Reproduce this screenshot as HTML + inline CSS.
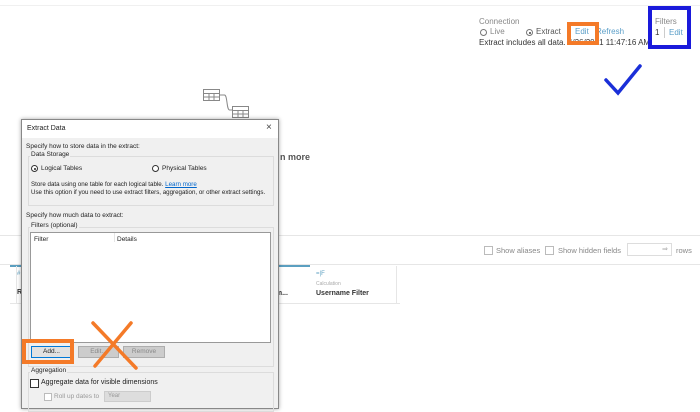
<!DOCTYPE html>
<html><head><style>
*{margin:0;padding:0;box-sizing:border-box}
body{width:700px;height:406px;overflow:hidden;background:#fff;position:relative;font-family:"Liberation Sans",sans-serif;}
.a{position:absolute;white-space:nowrap}
.t{font-size:8px;color:#333}
.g{color:#888}
.lk{color:#5a9ec8}
.rad{position:absolute;width:7px;height:7px;border:1px solid #777;border-radius:50%;background:#fff}
.cb{position:absolute;border:1px solid #bbb;background:#fff}
.grp{position:absolute;border:1px solid #dcdcdc}
.btn{position:absolute;height:12px;border:1px solid #adadad;background:#ccc;font-size:6.5px;color:#888;text-align:center;line-height:10px}
.d{font-size:6.5px;color:#222}
</style></head><body>
<div class="a" style="left:0;top:5px;width:700px;height:1px;background:#f0f0f0"></div>

<div class="a t g" style="left:479px;top:17px">Connection</div>
<div class="rad" style="left:480px;top:29px"></div><div class="a t g" style="left:490px;top:27px">Live</div>
<div class="rad" style="left:526px;top:29px"><div style="position:absolute;left:1.5px;top:1.5px;width:2px;height:2px;border-radius:50%;background:#444"></div></div>
<div class="a t" style="left:536px;top:27px;color:#555">Extract</div>
<div class="a t lk" style="left:575px;top:27px">Edit</div>
<div class="a t lk" style="left:596px;top:27px">Refresh</div>
<div class="a t" style="left:479px;top:38px">Extract includes all data. 4/26/2021 11:47:16 AM</div>
<div class="a" style="left:567px;top:22px;width:32px;height:23px;border:4px solid #f47a28"></div>

<div class="a t g" style="left:655px;top:17px">Filters</div>
<div class="a t" style="left:655px;top:28px">1</div>
<div class="a" style="left:664px;top:27px;width:1px;height:11px;background:#ccc"></div>
<div class="a t lk" style="left:669px;top:28px">Edit</div>
<div class="a" style="left:648px;top:6px;width:43px;height:43px;border:4px solid #1a1adb"></div>
<svg class="a" style="left:600px;top:60px" width="46" height="40"><path d="M6 20 L18 33 L40 6" stroke="#1a2fd8" stroke-width="3.5" fill="none" stroke-linecap="round"/></svg>

<svg class="a" style="left:200px;top:86px" width="60" height="36"><g stroke="#888" fill="#fff" stroke-width="1"><rect x="3.5" y="3.5" width="16" height="11"/><path d="M3.5 7.5h16M3.5 11h16M9 7.5v7M14 7.5v7"/><rect x="32.5" y="20.5" width="16" height="11"/><path d="M32.5 24.5h16M32.5 28h16M38 24.5v7M43 24.5v7"/><path d="M19.5 9h5c3 0 2 15 5 15h3" fill="none"/></g></svg>
<div class="a" style="left:280px;top:152px;font-size:9px;font-weight:bold;color:#555">n more</div>

<div class="a" style="left:0;top:235px;width:700px;height:1px;background:#e6e6e6"></div>
<div class="cb" style="left:484px;top:246px;width:9px;height:9px"></div><div class="a t g" style="left:496px;top:246px;font-size:7.5px">Show aliases</div>
<div class="cb" style="left:545px;top:246px;width:9px;height:9px"></div><div class="a t g" style="left:558px;top:246px;font-size:7.5px">Show hidden fields</div>
<div class="a" style="left:627px;top:243px;width:45px;height:13px;border:1px solid #ddd"></div><div class="a" style="left:662px;top:245px;font-size:7px;color:#aaa">⇒</div>
<div class="a t g" style="left:676px;top:246px;font-size:7.5px">rows</div>
<div class="a" style="left:0;top:264px;width:700px;height:1px;background:#e6e6e6"></div>
<div class="a" style="left:10px;top:265px;width:300px;height:2px;background:#5b9fc0"></div>
<div class="a" style="left:16px;top:266px;width:1px;height:37px;background:#e6e6e6"></div>
<div class="a" style="left:396px;top:266px;width:1px;height:37px;background:#e6e6e6"></div>
<div class="a" style="left:10px;top:303px;width:390px;height:1px;background:#e6e6e6"></div>
<div class="a" style="left:17px;top:271px;font-size:6px;color:#5b9fc0">#</div>
<div class="a" style="left:17px;top:289px;font-size:7px;font-weight:bold;color:#333">R</div>
<div class="a" style="left:316px;top:271px;font-size:6px;color:#5b9fc0">=|F</div>
<div class="a" style="left:316px;top:281px;font-size:5px;color:#aaa">Calculation</div>
<div class="a" style="left:316px;top:290px;font-size:7px;font-weight:bold;color:#333">Username Filter</div>
<div class="a" style="left:272px;top:290px;font-size:7px;font-weight:bold;color:#333">am...</div>

<!-- dialog -->
<div class="a" style="left:21px;top:119px;width:258px;height:290px;background:#f0f0f0;border:1px solid #888;box-shadow:0 0 4px rgba(0,0,0,.35)">
 <div class="a" style="left:0;top:0;width:256px;height:18px;background:#fff"></div>
 <div class="a" style="left:5px;top:5px;font-size:7px;color:#222">Extract Data</div>
 <div class="a" style="left:244px;top:2px;font-size:10px;color:#444">×</div>
 <div class="a d" style="left:4px;top:23px">Specify how to store data in the extract:</div>
 <div class="grp" style="left:6px;top:36px;width:246px;height:50px"></div>
 <div class="a d" style="left:8px;top:31px;background:#f0f0f0;padding:0 1px">Data Storage</div>
 <div class="rad" style="left:9px;top:45px;border-color:#333"><div style="position:absolute;left:1.5px;top:1.5px;width:2px;height:2px;border-radius:50%;background:#222"></div></div>
 <div class="a d" style="left:19px;top:45px">Logical Tables</div>
 <div class="rad" style="left:130px;top:45px;border-color:#333"></div>
 <div class="a d" style="left:140px;top:45px">Physical Tables</div>
 <div class="a d" style="left:9px;top:61px;font-size:6.2px">Store data using one table for each logical table. <span style="color:#0066cc;text-decoration:underline">Learn more</span></div>
 <div class="a d" style="left:9px;top:69px;font-size:6.2px">Use this option if you need to use extract filters, aggregation, or other extract settings.</div>
 <div class="a d" style="left:4px;top:92px">Specify how much data to extract:</div>
 <div class="grp" style="left:6px;top:107px;width:246px;height:140px"></div>
 <div class="a d" style="left:8px;top:102px;background:#f0f0f0;padding:0 1px">Filters (optional)</div>
 <div class="a" style="left:8px;top:112px;width:241px;height:111px;background:#fff;border:1px solid #999"></div>
 <div class="a d" style="left:12px;top:116px">Filter</div>
 <div class="a d" style="left:95px;top:116px">Details</div>
 <div class="a" style="left:92px;top:113px;width:1px;height:9px;background:#e5e5e5"></div>
 <div class="btn" style="left:9px;top:226px;width:41px;background:#e1e1e1;border-color:#0078d7;color:#222">Add...</div>
 <div class="btn" style="left:56px;top:226px;width:41px;background:#ccc">Edit...</div>
 <div class="btn" style="left:101px;top:226px;width:42px;background:#ccc">Remove</div>
 <div class="grp" style="left:6px;top:252px;width:246px;height:40px"></div>
 <div class="a d" style="left:8px;top:247px;background:#f0f0f0;padding:0 1px">Aggregation</div>
 <div class="a" style="left:8px;top:259px;width:9px;height:9px;border:1px solid #333;background:#fff"></div>
 <div class="a d" style="left:19px;top:259px;font-size:7px">Aggregate data for visible dimensions</div>
 <div class="a" style="left:22px;top:273px;width:8px;height:8px;border:1px solid #bbb;background:#fff"></div>
 <div class="a d" style="left:32px;top:273px;color:#999">Roll up dates to</div>
 <div class="a" style="left:82px;top:271px;width:47px;height:11px;border:1px solid #ccc;background:#ddd;font-size:6px;color:#999;padding:1px 3px">Year</div>
</div>
<div class="a" style="left:22px;top:339px;width:52px;height:25px;border:4px solid #f47a28"></div>
<svg class="a" style="left:85px;top:318px" width="60" height="56"><path d="M8 5 L51 50 M46 5 L10 48" stroke="#f47a28" stroke-width="3.5" fill="none" stroke-linecap="round"/></svg>
</body></html>
